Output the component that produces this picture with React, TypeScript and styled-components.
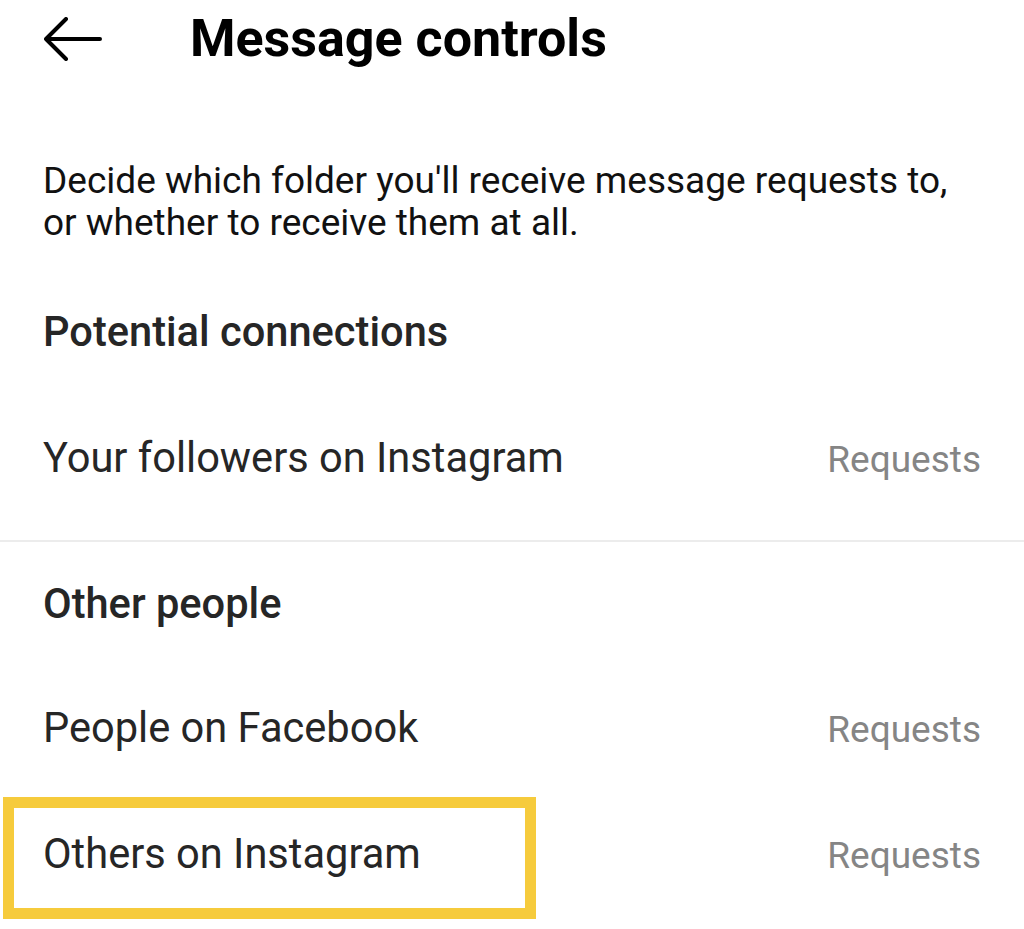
import styled, { createGlobalStyle } from 'styled-components'

const GlobalStyle = createGlobalStyle`
  html, body {
    margin: 0;
    padding: 0;
    background: #ffffff;
  }
  body {
    font-family: Roboto, 'Noto Sans', Arial, sans-serif;
    -webkit-font-smoothing: antialiased;
  }
`

const Screen = styled.div`
  width: 1024px;
  height: 929px;
  overflow: hidden;
  background: #fff;
  display: flex;
  flex-direction: column;
`

const Header = styled.header`
  height: 77px;
  display: flex;
  align-items: center;
  gap: 88px;
  padding-left: 44px;
`

const BackButton = styled.button`
  border: 0;
  background: none;
  padding: 0;
  width: 58px;
  height: 44px;
  display: flex;
  align-items: center;
  color: #000;
`

const Title = styled.h1`
  margin: 0;
  font-size: 52px;
  line-height: 77px;
  font-weight: 700;
  color: #000;
`

const Content = styled.div`
  padding: 0 43px;
`

const Description = styled.p`
  margin: 83px 0 24px;
  padding: 0 43px;
  font-size: 37px;
  line-height: 42px;
  color: #111;
`

const SectionTitle = styled.h2<{ $height: number }>`
  margin: 0;
  height: ${(p) => p.$height}px;
  display: flex;
  align-items: center;
  font-size: 41.6px;
  font-weight: 500;
  color: #262626;
`

const Row = styled.div`
  position: relative;
  height: 126px;
  display: flex;
  align-items: center;
  justify-content: space-between;
`

const Label = styled.span`
  font-size: 41.6px;
  color: #262626;
`

const Value = styled.span`
  font-size: 37px;
  color: #858585;
  padding-top: 5px;
`

const Divider = styled.hr`
  margin: 20px 0 0;
  border: 0;
  height: 2px;
  background: #ececec;
`

const Highlight = styled.div`
  position: absolute;
  left: -40px;
  top: 7px;
  width: 533px;
  height: 122px;
  box-sizing: border-box;
  border: 11px solid #f6cb3c;
  pointer-events: none;
`

const BackArrow = () => (
  <svg width="58" height="44" viewBox="0 0 58 44" fill="none">
    <path
      d="M22 2 L2 22 L22 42 M2 22 H56"
      stroke="currentColor"
      strokeWidth="4"
      strokeLinecap="round"
      strokeLinejoin="round"
    />
  </svg>
)

type Item = { label: string; value: string; highlighted?: boolean }

const sections: { title: string; items: Item[] }[] = [
  {
    title: 'Potential connections',
    items: [{ label: 'Your followers on Instagram', value: 'Requests' }],
  },
  {
    title: 'Other people',
    items: [
      { label: 'People on Facebook', value: 'Requests' },
      { label: 'Others on Instagram', value: 'Requests', highlighted: true },
    ],
  },
]

export default function App() {
  return (
    <>
      <GlobalStyle />
      <Screen>
        <Header>
          <BackButton aria-label="Back">
            <BackArrow />
          </BackButton>
          <Title>Message controls</Title>
        </Header>
        <Description>
          Decide which folder you'll receive message requests to,
          <br />
          or whether to receive them at all.
        </Description>
        {sections.map((section, i) => (
          <div key={section.title}>
            {i > 0 && <Divider />}
            <Content>
              <SectionTitle $height={i === 0 ? 126 : 122}>{section.title}</SectionTitle>
              {section.items.map((item) => (
                <Row key={item.label}>
                  {item.highlighted && <Highlight />}
                  <Label>{item.label}</Label>
                  <Value>{item.value}</Value>
                </Row>
              ))}
            </Content>
          </div>
        ))}
      </Screen>
    </>
  )
}
